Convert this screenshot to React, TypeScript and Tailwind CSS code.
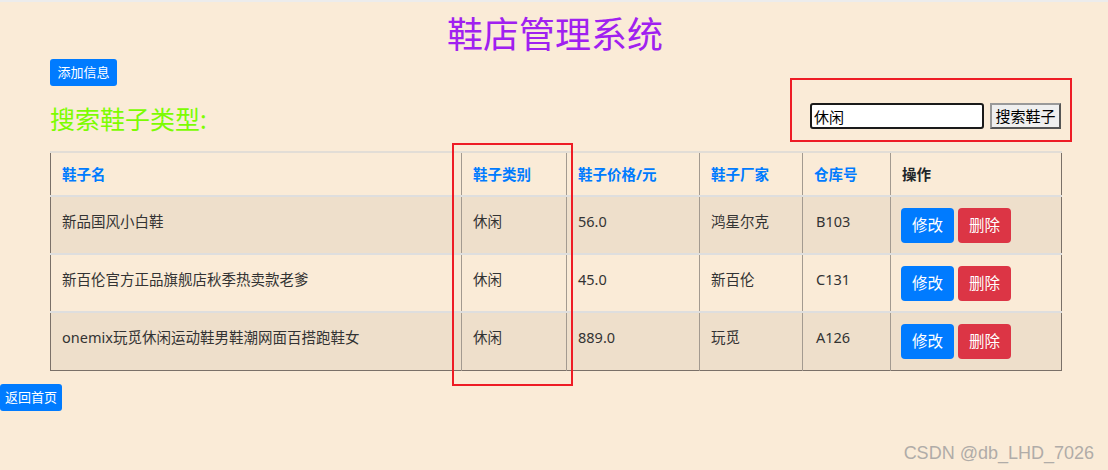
import React from "react";

const rows = [
  { name: "新品国风小白鞋", type: "休闲", price: "56.0", maker: "鸿星尔克", store: "B103" },
  { name: "新百伦官方正品旗舰店秋季热卖款老爹", type: "休闲", price: "45.0", maker: "新百伦", store: "C131" },
  { name: "onemix玩觅休闲运动鞋男鞋潮网面百搭跑鞋女", type: "休闲", price: "889.0", maker: "玩觅", store: "A126" },
];

const font = { fontFamily: '"Noto Sans", "Noto Sans CJK SC", sans-serif' };

export default function App() {
  return (
    <div
      className="relative w-[1108px] h-[470px] bg-[#faebd7] border-t-2 border-[#ececec] text-[#212529] overflow-hidden"
      style={font}
    >
      <h1 className="text-center text-[36px] leading-[44px] text-[#a020f0] pt-[11px] ml-[2px]">鞋店管理系统</h1>
      <div className="pl-[50px] mt-[2px]">
        <button className="bg-[#007bff] text-white text-[13px] leading-[19px] rounded-[3px] w-[67px] py-[4px]">添加信息</button>
      </div>
      <div className="flex items-start pl-[50px] pr-[47px] mt-[14px]">
        <h3 className="text-[25px] leading-[38px] text-[#7cfc00]">搜索鞋子类型:</h3>
        <div className="ml-auto flex items-center gap-[6px] mt-[3px]">
          <input
            defaultValue="休闲"
            className="w-[174px] h-[26px] border-2 border-[#1a1a1a] rounded-[3px] bg-white px-[2px] text-[15px] text-black outline-none"
          />
          <button className="h-[26px] w-[71px] bg-[#efefef] border-2 border-[#555] border-t-[#999] border-l-[#999] text-[15px] leading-[20px] text-black">搜索鞋子</button>
        </div>
      </div>
      <div className="pl-[50px] mt-[13px]">
        <table className="border-collapse w-[1011px] table-fixed border-l border-b border-r border-[#7a7068] border-t-2 border-t-[#e2ddd6]">
          <colgroup>
            <col className="w-[411px]" />
            <col className="w-[105px]" />
            <col className="w-[133px]" />
            <col className="w-[103px]" />
            <col className="w-[88px]" />
            <col className="w-[171px]" />
          </colgroup>
          <thead>
            <tr className="h-[44px]">
              {["鞋子名", "鞋子类别", "鞋子价格/元", "鞋子厂家", "仓库号"].map((h) => (
                <th key={h} className="text-left pl-[11px] align-middle text-[14.5px] font-bold text-[#007bff] border-l border-[#a39a90] first:border-l-0 pt-[2px]">
                  {h}
                </th>
              ))}
              <th className="text-left pl-[11px] align-middle text-[14.5px] font-bold text-[#212529] border-l border-[#a39a90] pt-[2px]">操作</th>
            </tr>
          </thead>
          <tbody>
            {rows.map((r, i) => (
              <tr key={r.store} className={`h-[58px] border-t-2 border-[#dedede] ${i % 2 === 0 ? "bg-[#eedfcb]" : "bg-[#faebd7]"}`}>
                <td className="align-top pl-[11px] pt-[12px] text-[14.5px] leading-[24px] text-[#333]">{r.name}</td>
                <td className="align-top pl-[11px] pt-[12px] text-[14.5px] leading-[24px] text-[#333] border-l border-[#a39a90]">{r.type}</td>
                <td className="align-top pl-[11px] pt-[12px] text-[14.5px] leading-[24px] text-[#333] border-l border-[#a39a90]">{r.price}</td>
                <td className="align-top pl-[11px] pt-[12px] text-[14.5px] leading-[24px] text-[#333] border-l border-[#a39a90]">{r.maker}</td>
                <td className="align-top pl-[13px] pt-[12px] text-[14.5px] leading-[24px] text-[#333] border-l border-[#a39a90]">{r.store}</td>
                <td className="align-top pl-[10px] pt-[11px] border-l border-[#a39a90]">
                  <div className="flex gap-[4px]">
                    <button className="w-[53px] h-[35px] rounded-[4px] bg-[#007bff] text-white text-[15.5px]">修改</button>
                    <button className="w-[53px] h-[35px] rounded-[4px] bg-[#dc3545] text-white text-[15.5px]">删除</button>
                  </div>
                </td>
              </tr>
            ))}
          </tbody>
        </table>
      </div>
      <div className="mt-[13px]">
        <button className="bg-[#007bff] text-white text-[13px] leading-[19px] rounded-[3px] py-[4px] h-[27px] w-[62px]">返回首页</button>
      </div>

      <div className="absolute pointer-events-none border-2 border-[#ee1c25] left-[790px] top-[76px] w-[282px] h-[64px]" />
      <div className="absolute pointer-events-none border-2 border-[#ee1c25] left-[452px] top-[141px] w-[121px] h-[243px]" />
      <div className="absolute right-[14px] bottom-[6px] text-[18px] leading-[22px] text-[#b0aca8]" style={{ fontFamily: '"Liberation Sans", sans-serif' }}>
        CSDN @db_LHD_7026
      </div>
    </div>
  );
}
